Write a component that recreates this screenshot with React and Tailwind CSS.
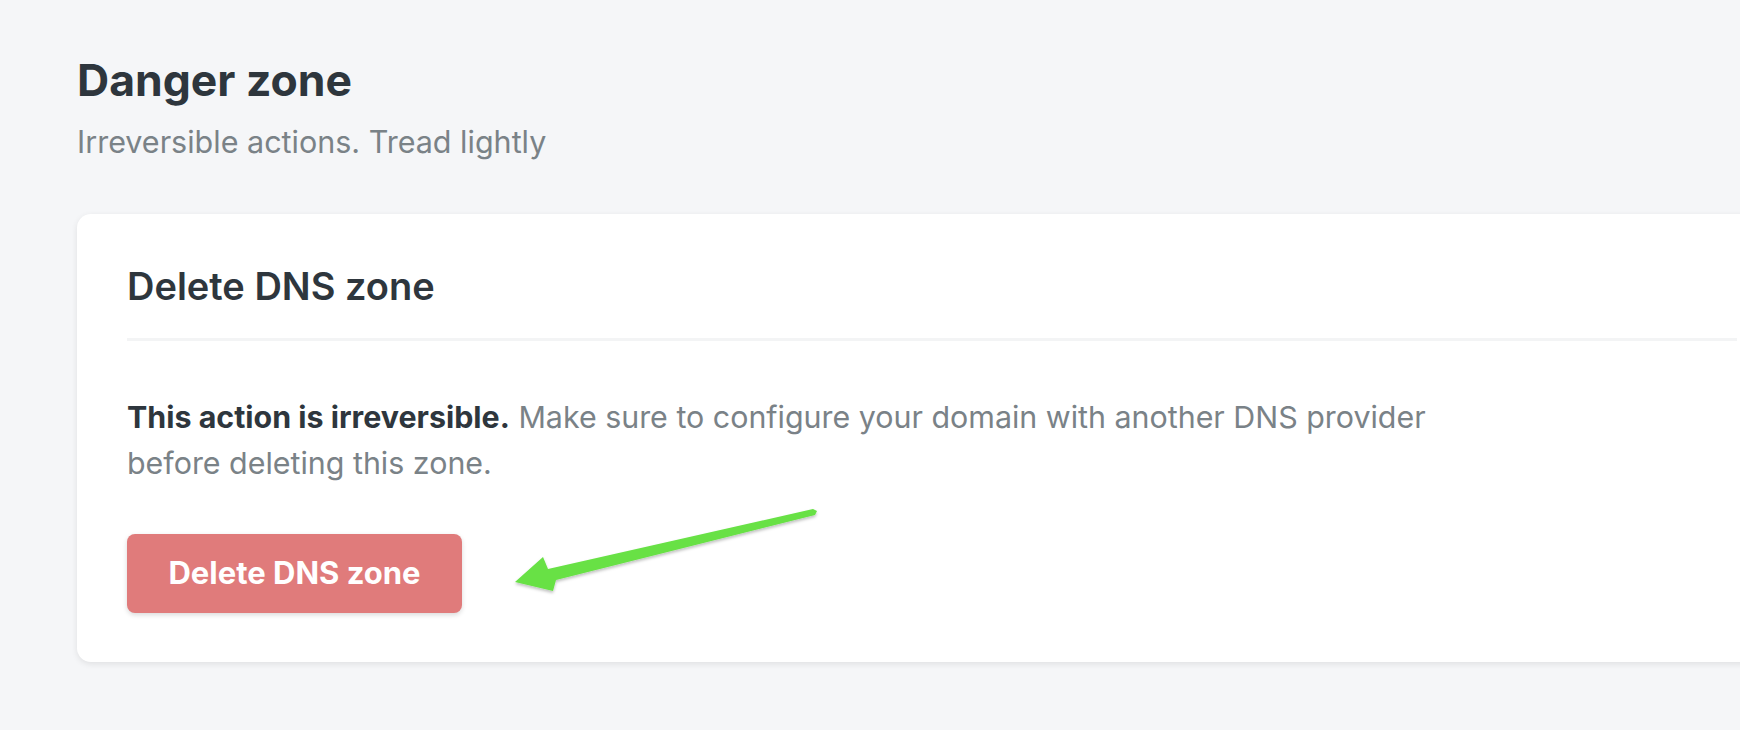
import React from 'react';

function Arrow() {
  return (
    <svg
      className="absolute left-0 top-0 pointer-events-none"
      width="1740"
      height="730"
      viewBox="0 0 1740 730"
    >
      <defs>
        <filter id="arrowShadow" x="-10%" y="-50%" width="120%" height="200%">
          <feDropShadow dx="0" dy="2" stdDeviation="1.5" floodColor="#000" floodOpacity="0.25" />
        </filter>
      </defs>
      <polygon
        filter="url(#arrowShadow)"
        fill="#67e145"
        points="515,582 543,557 548,569 813,509 817,511 815,515 556,580 553,591"
      />
    </svg>
  );
}

export default function App() {
  return (
    <div className="relative h-[730px] w-[1740px] overflow-hidden bg-[#f5f6f8] font-['Inter',sans-serif]">
      <div className="pl-[77px] pt-[56px]">
        <h1 className="text-[44.5px] leading-[48px] font-bold text-[#2e363d]">Danger zone</h1>
        <p className="mt-[18px] text-[30.5px] leading-[40px] text-[#7a8287]">
          Irreversible actions. Tread lightly
        </p>

        <div className="mt-[52px] w-[1720px] rounded-[14px] bg-white pl-[50px] pr-[60px] pt-[52px] pb-[49px] shadow-[0_2px_6px_rgba(0,0,0,0.09)]">
          <h2 className="text-[38px] leading-[40px] font-semibold text-[#2e363d]">Delete DNS zone</h2>
          <div className="mt-[32px] h-[3px] bg-[#f3f4f5]" />

          <p className="mt-[53px] max-w-[1360px] text-[30.4px] leading-[46px] text-[#7a8287]">
            <span className="font-bold text-[#2e363d]">This action is irreversible.</span> Make sure to
            configure your domain with another DNS provider before deleting this zone.
          </p>

          <button className="mt-[48px] flex h-[79px] w-[335px] items-center justify-center rounded-[8px] bg-[#e07b7b] text-[31px] font-bold text-white shadow-[0_2px_5px_rgba(0,0,0,0.15)]">
            Delete DNS zone
          </button>
        </div>
      </div>
      <Arrow />
    </div>
  );
}
